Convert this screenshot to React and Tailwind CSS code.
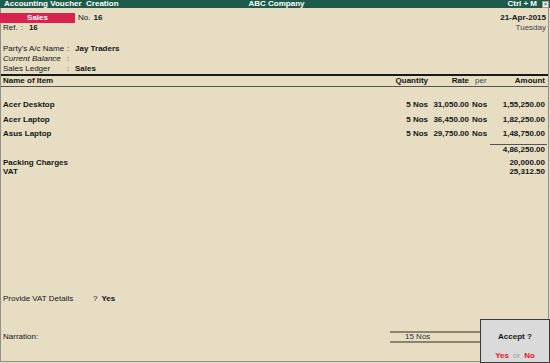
export default function App() {
  const items = [
    { name: "Acer Desktop", qty: "5 Nos", rate: "31,050.00", per: "Nos", amt: "1,55,250.00", h: "h-[14px]" },
    { name: "Acer Laptop", qty: "5 Nos", rate: "36,450.00", per: "Nos", amt: "1,82,250.00", h: "h-[15px]" },
    { name: "Asus Laptop", qty: "5 Nos", rate: "29,750.00", per: "Nos", amt: "1,48,750.00", h: "h-[14px]" },
  ];
  return (
    <div className="w-[550px] h-[363px] bg-[#e6ddc3] font-['Liberation_Sans',Arial,sans-serif] text-[8px] leading-[10px] text-[#151515] relative overflow-hidden flex flex-col">
      {/* title bar */}
      <div className="h-[8px] shrink-0 bg-[#1d5b4b] text-white font-bold flex items-center pl-[4px] pr-[1px] leading-[8px]">
        <div className="flex-1">Accounting Voucher&nbsp; Creation</div>
        <div>ABC Company</div>
        <div className="flex-1 flex justify-end items-center gap-[5px]">
          <span>Ctrl + M</span>
          <span className="w-[7px] h-[7px] bg-[#ececec] border border-[#9a9a9a] text-[#333] flex items-center justify-center text-[6px] leading-[6px] font-normal">×</span>
        </div>
      </div>

      {/* frame */}
      <div className="flex-1 mb-[1px] w-[549px] border-x border-b border-[#8f8f8f] flex flex-col">
        {/* header info */}
        <div className="pr-[2px] flex flex-col">
          <div className="mt-[5px] h-[10px] flex items-center">
            <div className="w-[75px] h-[10px] -ml-[1px] bg-[#d9234f] text-white font-bold text-center leading-[10px]">Sales</div>
            <span className="ml-[3px]">No.</span>
            <span className="ml-[3px] font-bold">16</span>
            <span className="ml-auto font-bold">21-Apr-2015</span>
          </div>
          <div className="h-[10px] flex items-center pl-[2px]">
            <span>Ref.</span>
            <span className="ml-[3px]">:</span>
            <span className="ml-[6px] font-bold">16</span>
            <span className="ml-auto text-[#444]">Tuesday</span>
          </div>
          <div className="mt-[11px] h-[10px] flex items-center pl-[2px]">
            <span className="w-[64px]">Party's A/c Name</span>
            <span className="w-[8px]">:</span>
            <span className="font-bold">Jay Traders</span>
          </div>
          <div className="h-[10px] flex items-center pl-[2px]">
            <span className="w-[64px] italic">Current Balance</span>
            <span className="w-[8px]">:</span>
          </div>
          <div className="h-[9px] flex items-center pl-[2px]">
            <span className="w-[64px]">Sales Ledger</span>
            <span className="w-[8px]">:</span>
            <span className="font-bold">Sales</span>
          </div>
        </div>

        <div className="mt-[1px] h-[2px] bg-[#1a1a1a]" />

        {/* column header */}
        <div className="h-[11px] border-b border-[#555] flex items-center pl-[2px] pr-[3px] font-bold">
          <div className="flex-1">Name of Item</div>
          <div className="w-[40px] text-right">Quantity</div>
          <div className="w-[41px] text-right">Rate</div>
          <div className="w-[21px] pl-[6px] font-normal text-[#444]">per</div>
          <div className="w-[55px] text-right">Amount</div>
        </div>

        <div className="h-[11px]" />

        {items.map((it) => (
          <div key={it.name} className={`${it.h} flex items-center pl-[2px] pr-[3px] font-bold`}>
            <div className="flex-1">{it.name}</div>
            <div className="w-[40px] text-right">{it.qty}</div>
            <div className="w-[41px] text-right">{it.rate}</div>
            <div className="w-[21px] pl-[3px]">{it.per}</div>
            <div className="w-[55px] text-right">{it.amt}</div>
          </div>
        ))}

        <div className="mt-[3px] flex pr-[1px]">
          <div className="flex-1" />
          <div className="w-[57px] border-t border-[#555] pr-[2px] h-[11px] flex items-center justify-end font-bold">4,86,250.00</div>
        </div>

        <div className="mt-[3px] h-[9px] flex items-center pl-[2px] pr-[3px] font-bold">
          <div className="flex-1">Packing Charges</div>
          <div>20,000.00</div>
        </div>
        <div className="h-[9px] flex items-center pl-[2px] pr-[3px] font-bold">
          <div className="flex-1">VAT</div>
          <div>25,312.50</div>
        </div>

        <div className="flex-1" />

        <div className="h-[10px] flex items-center pl-[2px]">
          <span className="w-[90px]">Provide VAT Details</span>
          <span>?</span>
          <span className="ml-[4px] font-bold">Yes</span>
        </div>

        <div className="h-[27px]" />

        <div className="h-[12px] flex items-center pl-[2px]">
          <span className="w-[387px]">Narration:</span>
          <div className="w-[91px] h-[12px] border-y-2 border-[#8a8573] flex items-center pl-[15px] text-[#333]">15 Nos</div>
        </div>

        <div className="h-[18px]" />
      </div>

      {/* Accept dialog */}
      <div className="absolute left-[480px] top-[319px] w-[70px] h-[44px] bg-[#dadada] border-[1.5px] border-[#3c3c3c] flex flex-col items-center">
        <div className="mt-[12px] font-bold leading-[10px]">Accept ?</div>
        <div className="mt-[9px] leading-[10px] flex items-center gap-[4px]">
          <span className="font-bold text-[#e8141c]">Yes</span>
          <span className="text-[#9a9a9a]">or</span>
          <span className="font-bold text-[#e8141c]">No</span>
        </div>
      </div>
    </div>
  );
}
